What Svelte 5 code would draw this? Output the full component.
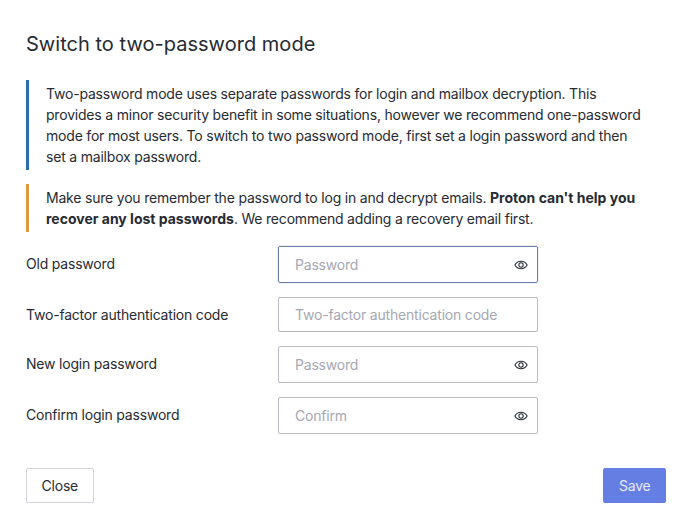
<script>
  const fields = [
    { label: 'Old password', placeholder: 'Password', eye: true, focus: true },
    { label: 'Two-factor authentication code', placeholder: 'Two-factor authentication code' },
    { label: 'New login password', placeholder: 'Password', eye: true },
    { label: 'Confirm login password', placeholder: 'Confirm', eye: true }
  ];
</script>

<div class="modal">
  <h1>Switch to two-password mode</h1>
  <div class="alert info">Two-password mode uses separate passwords for login and mailbox decryption. This provides a minor security benefit in some situations, however we recommend one-password mode for most users. To switch to two password mode, first set a login password and then set a mailbox password.</div>
  <div class="alert warn">Make sure you remember the password to log in and decrypt emails. <strong>Proton can't help you recover any lost passwords</strong>. We recommend adding a recovery email first.</div>
  <div class="fields">
    {#each fields as f}
      <div class="row">
        <div class="label">{f.label}</div>
        <div class="input" class:focus={f.focus} class:plain={!f.eye}>
          <span class="ph">{f.placeholder}</span>
          {#if f.eye}
            <svg viewBox="0 0 16 16" width="14" height="14" fill="none" stroke="#262a33" stroke-width="1.2">
              <path d="M1 8c1.600-2.900 4-4.300 7-4.300s5.400 1.400 7 4.300c-1.600 2.900-4 4.300-7 4.300S2.600 10.900 1 8z" />
              <circle cx="8" cy="8" r="2.500" />
            </svg>
          {/if}
        </div>
      </div>
    {/each}
  </div>
  <div class="footer">
    <button class="close">Close</button>
    <button class="save">Save</button>
  </div>
</div>

<style>
  :global(body) {
    margin: 0;
    background: #fff;
  }
  .modal {
    box-sizing: border-box;
    width: 687px;
    height: 523px;
    padding: 29px 21px 20px 26px;
    font-family: Inter, "Liberation Sans", sans-serif;
    font-size: 14px;
    line-height: 21px;
    letter-spacing: -0.2px;
    color: #262a33;
    display: flex;
    flex-direction: column;
  }
  h1 {
    margin: 0 0 21px;
    font-size: 20px;
    font-weight: 400;
    line-height: 30px;
    letter-spacing: 0.03px;
  }
  strong {
    letter-spacing: 0;
  }
  .alert {
    border-left: 3px solid #2a6fa8;
    padding: 3px 21px 3px 17px;
    margin-bottom: 14px;
  }
  .warn {
    border-left-color: #e09a3c;
  }
  .fields {
    display: flex;
    flex-direction: column;
    gap: 14px;
  }
  .row {
    display: flex;
  }
  .label {
    width: 252px;
    padding-top: 7px;
  }
  .input {
    box-sizing: border-box;
    width: 260px;
    height: 37px;
    border: 1px solid #b9bbc6;
    border-radius: 2px;
    padding: 0 9px 0 16px;
    display: flex;
    align-items: center;
    justify-content: space-between;
  }
  .input.plain {
    height: 35px;
  }
  .input.focus {
    border-color: #6d7fb0;
    box-shadow: 0 0 0 1px rgba(109, 127, 176, 0.12);
  }
  .ph {
    color: #a5a7b2;
  }
  .footer {
    margin-top: auto;
    display: flex;
    justify-content: space-between;
  }
  button {
    box-sizing: border-box;
    height: 35px;
    border-radius: 2px;
    font: inherit;
    letter-spacing: inherit;
    padding: 0 14.5px;
  }
  .close {
    background: #fff;
    border: 1px solid #d2d3d9;
    color: #262a33;
  }
  .save {
    background: #657ee4;
    border: 1px solid #657ee4;
    color: #e6eafb;
  }
</style>
